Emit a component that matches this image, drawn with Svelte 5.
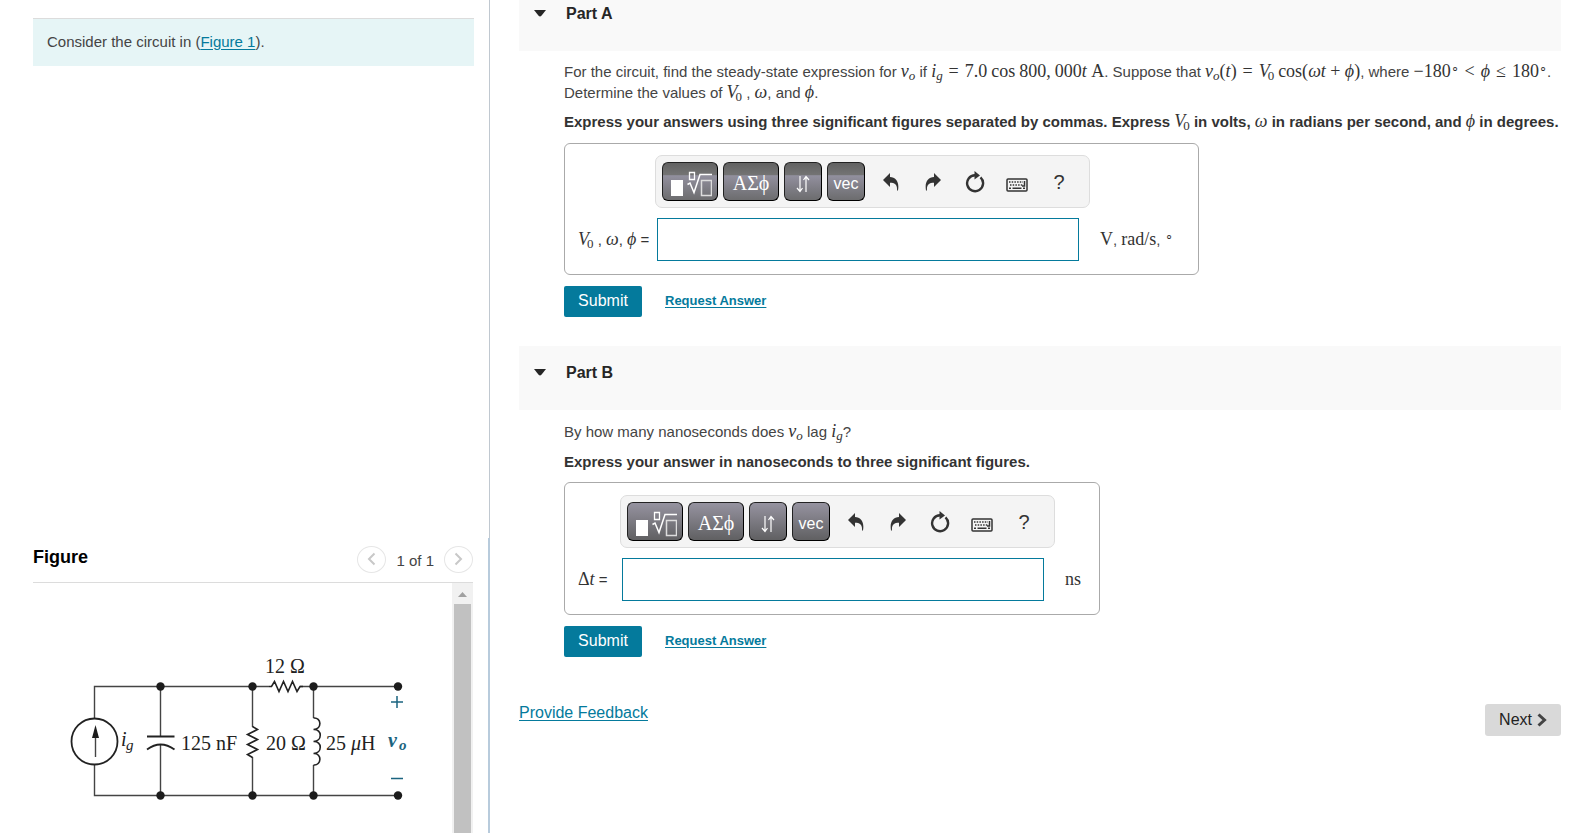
<script>
  let answerA = $state('');
  let answerB = $state('');
</script>

{#snippet vo()}<span class="math"><i>v</i><sub><i>o</i></sub></span>{/snippet}
{#snippet ig()}<span class="math"><i>i</i><sub><i>g</i></sub></span>{/snippet}
{#snippet v0()}<span class="math"><i>V</i><sub class="tight">0</sub></span>{/snippet}

{#snippet partHeader(title)}
  <header class="part-header">
    <button class="toggle" aria-label="Collapse {title}">
      <svg width="12" height="7" viewBox="0 0 12 7"><path d="M0 0h12L7.4 5.8a2 2 0 0 1-2.8 0z" fill="#262626" /></svg>
    </button>
    <h2>{title}</h2>
  </header>
{/snippet}

{#snippet toolbar(variant)}
  <div class="toolbar {variant}">
    <button class="key wide" aria-label="Templates">
      <svg width="44" height="28" viewBox="0 0 44 28" fill="none" stroke="#fff">
        <path d="M3 10h12v16H3z" fill="#fff" stroke="none" />
        <path d="M21.500 2.500h5v7h-5z" stroke-width="1.300" />
        <path d="M19.500 14.500l2.500-1.500 4 9.500L32 4.500h14" stroke-width="1.500" />
        <path d="M33.500 10.500h10v15h-10z" stroke="#ddd" stroke-width="1.500" />
      </svg>
    </button>
    <button class="key wide greek">ΑΣϕ</button>
    <button class="key" aria-label="Arrows">
      <svg width="16" height="18" viewBox="0 0 16 18" fill="none" stroke="#fff" stroke-width="1.200">
        <path d="M5 1v15.500M2 13l3 3.500L7.500 13M11 17V1.500M8.500 5L11 1.500 14 5" />
      </svg>
    </button>
    <button class="key vec">vec</button>
    <div class="tools">
      <button aria-label="Undo">
        <svg width="16" height="18" viewBox="0 0 16 18"><path d="M0 7L7 0v4c6 .3 9.500 5 8 13.500h-1C14.500 12 12 9.800 7 9.800V14z" fill="#333" /></svg>
      </button>
      <button aria-label="Redo">
        <svg width="16" height="18" viewBox="0 0 16 18"><path d="M16 7L9 0v4C3 4.300-.5 9 1 17.500h1C1.500 12 4 9.800 9 9.800V14z" fill="#333" /></svg>
      </button>
      <button aria-label="Reset">
        <svg width="20" height="22" viewBox="0 0 20 22"><path d="M15.500 6.300A8 8 0 1 1 10 4.200" fill="none" stroke="#333" stroke-width="2.400" /><path d="M9.500 0l5.500 4.500-5.500 4z" fill="#333" /></svg>
      </button>
      <button class="low" aria-label="Keyboard">
        <svg width="22" height="14" viewBox="0 0 22 14" fill="none" stroke="#333">
          <rect x="1" y="1" width="20" height="12" rx="1" stroke-width="1.500" />
          <path d="M3 4h14M4 7h13" stroke-width="1.500" stroke-dasharray="1.500 1.200" />
          <path d="M3 10.300h2M6.500 10.300h9M17 10.300h2M18.500 3v5H16" stroke-width="1.500" />
        </svg>
      </button>
      <button class="help" aria-label="Help">?</button>
    </div>
  </div>
{/snippet}

{#snippet actions()}
  <div class="actions">
    <button class="submit">Submit</button>
    <a class="request" href="#answer">Request Answer</a>
  </div>
{/snippet}

<div class="page">
  <aside>
    <div class="intro">
      <p>Consider the circuit in (<a href="#figure">Figure 1</a>).</p>
    </div>
    <section class="figure" id="figure">
      <header>
        <h2>Figure</h2>
        <nav>
          <button aria-label="Previous figure"><svg width="9" height="14" viewBox="0 0 9 14"><path d="M7.500 1.500L2 7l5.500 5.500" /></svg></button>
          <span>1 of 1</span>
          <button aria-label="Next figure"><svg width="9" height="14" viewBox="0 0 9 14"><path d="M1.500 1.500L7 7l-5.500 5.500" /></svg></button>
        </nav>
      </header>
      <div class="viewer">
        <svg class="circuit" width="419" height="250" viewBox="33 583 419 250" role="img" aria-label="Circuit diagram">
          <g fill="none" stroke="#444" stroke-width="1.400">
            <path d="M94.500 718V686.500H269M300 686.500H398" />
            <path d="M269 686.500l2.500 0 3-5 4.500 10 4.500-10 4.500 10 4.500-10 4.500 10 3-5h3" stroke="#222" stroke-width="1.600" />
            <path d="M94.500 765v30.500H398" />
            <circle cx="94.500" cy="741.500" r="23" stroke="#222" stroke-width="1.800" />
            <path d="M95.500 757V735" />
            <path d="M160.500 686v50.500M160.500 745v50.500" />
            <path d="M147 736.500h27.500M147 749.500q13.500-10 27.500 0" stroke="#222" stroke-width="1.800" />
            <path d="M252.500 686v41M252.500 757v38.500M313.500 686v32M313.500 765v30.500" />
            <path d="M252.500 726.500l5 3-10 5 10 5-10 5 10 5-10 5 5 3" stroke="#222" stroke-width="1.600" />
            <path d="M313.500 718c8-1 9 11 0 11.500 9-.5 9 11.500 0 12 9-.5 9 11.500 0 12 9-.5 8 12.500 0 11.500" stroke="#222" stroke-width="1.600" />
          </g>
          <g fill="#1c1c1c">
            <path d="M95.500 725l3.500 13h-7z" />
            <circle cx="160.500" cy="686.500" r="4.200" /><circle cx="252.500" cy="686.500" r="4.200" />
            <circle cx="313.500" cy="686.500" r="4.200" /><circle cx="398" cy="686.500" r="4.200" />
            <circle cx="160.500" cy="795.500" r="4.200" /><circle cx="252.500" cy="795.500" r="4.200" />
            <circle cx="313.500" cy="795.500" r="4.200" /><circle cx="398" cy="795.500" r="4.200" />
          </g>
          <g class="labels">
            <text x="265" y="673">12 Ω</text>
            <text x="181" y="750">125 nF</text>
            <text x="266" y="750">20 Ω</text>
            <text x="326" y="750">25 <tspan font-style="italic">μ</tspan>H</text>
            <text x="121" y="746" font-style="italic">i</text>
            <text x="126" y="750" class="small" font-style="italic">g</text>
            <text x="388" y="747" class="out">v</text>
            <text x="399" y="750" class="out small">o</text>
          </g>
          <path d="M391 702h12M397 696v12M391 778.500h12" stroke="#1b6480" stroke-width="1.500" />
        </svg>
        <div class="scrollbar" aria-hidden="true">
          <svg width="9" height="5" viewBox="0 0 9 5"><path d="M0 5L4.500 0 9 5z" fill="#a0a0a0" /></svg>
          <div class="thumb"></div>
        </div>
      </div>
    </section>
  </aside>

  <main>
    <section class="part first">
      {@render partHeader('Part A')}
      <div class="body">
        <p class="question">
          For the circuit, find the steady-state expression for {@render vo()} if {@render ig()}<span class="math"><b class="rel">=</b>7.0<b class="op"></b>cos<b class="op"></b>800,<b class="op"></b>000<i>t</i>&nbsp;A</span>. Suppose that {@render vo()}<span class="math">(<i>t</i>)<b class="rel">=</b></span>{@render v0()}<span class="math"><b class="op"></b>cos(<i>ωt</i><b class="bin">+</b><i>ϕ</i>)</span>, where <span class="math">−180<sup>∘</sup><b class="rel">&lt;</b><i>ϕ</i><b class="rel">≤</b>180<sup>∘</sup></span>.<br />
          Determine the values of {@render v0()} , <span class="math"><i>ω</i></span>, and <span class="math"><i>ϕ</i></span>.
        </p>
        <p class="instruction">
          Express your answers using three significant figures separated by commas. Express {@render v0()} in volts, <span class="math"><i>ω</i></span> in radians per second, and <span class="math"><i>ϕ</i></span> in degrees.
        </p>
        <div class="answer">
          {@render toolbar('split')}
          <label for="a" class="triple">{@render v0()} , <span class="math"><i>ω</i></span>, <span class="math"><i>ϕ</i></span> =</label>
          <input id="a" type="text" bind:value={answerA} />
          <span class="unit"><span class="math">V</span>, <span class="math">rad/s</span>, <span class="math"><sup>∘</sup></span></span>
        </div>
        {@render actions()}
      </div>
    </section>

    <section class="part">
      {@render partHeader('Part B')}
      <div class="body">
        <p class="question">By how many nanoseconds does {@render vo()} lag {@render ig()}?</p>
        <p class="instruction">Express your answer in nanoseconds to three significant figures.</p>
        <div class="answer">
          {@render toolbar('smooth')}
          <label for="b" class="single"><span class="math">Δ<i>t</i></span> =</label>
          <input id="b" type="text" bind:value={answerB} />
          <span class="unit"><span class="math">ns</span></span>
        </div>
        {@render actions()}
      </div>
    </section>

    <footer>
      <a href="#feedback">Provide Feedback</a>
      <button class="next">Next <svg width="10" height="14" viewBox="0 0 10 14"><path d="M1.500 1.500L7.500 7l-6 5.500" fill="none" stroke="#444" stroke-width="3" /></svg></button>
    </footer>
  </main>
</div>

<style>
  :global(body) { background: #fff; }
  .page {
    display: grid;
    grid-template-columns: 490px minmax(0, 1fr);
    min-height: 100vh;
    font-family: "Liberation Sans", Arial, sans-serif;
    font-size: 15px;
    color: #444;
  }
  * { box-sizing: border-box; }
  h2, p { margin: 0; }
  button { font-family: inherit; padding: 0; border: 0; background: none; cursor: pointer; }
  svg { display: block; }
  a { color: #047a9c; text-underline-offset: 2px; }

  aside { display: flex; flex-direction: column; }
  .intro { flex: 1; padding: 18px 15px 0 33px; border-right: 1px solid #c0c8d0; }
  .intro p {
    padding: 13px 14px 15px;
    line-height: 19px;
    background: #e6f5f6;
    border-top: 1px solid #dcdcdc;
  }
  .figure { padding: 0 15px 0 33px; border-right: 2px solid #b8cbdc; }
  .figure header {
    display: flex;
    justify-content: space-between;
    height: 45px;
    border-bottom: 1px solid #dcdcdc;
  }
  .figure h2 { font-size: 18px; line-height: 38px; color: #000; }
  .figure nav { display: flex; align-items: center; gap: 10px; padding-bottom: 2px; }
  .figure nav span { font-size: 15px; padding-top: 3px; }
  .figure nav button {
    display: grid;
    place-items: center;
    width: 29px;
    height: 27px;
    border: 1px solid #e6e6e6;
    border-radius: 50%;
  }
  .figure nav path { fill: none; stroke: #c8c8c8; stroke-width: 2; }
  .viewer { display: flex; }
  .circuit { flex: 1; min-width: 0; }
  .labels { font-family: "Liberation Serif", serif; font-size: 20px; fill: #222; }
  .labels .small { font-size: 15px; }
  .labels .out { fill: #1b6480; font-style: italic; font-weight: bold; }
  .scrollbar {
    display: flex;
    flex-direction: column;
    align-items: center;
    gap: 7px;
    width: 21px;
    padding-top: 9px;
    background: #f1f1f1;
  }
  .thumb { flex: 1; width: 17px; background: #c1c1c1; }

  main { padding: 0 30px 0 29px; }
  .part { padding-bottom: 29px; }
  .part-header {
    display: flex;
    align-items: center;
    height: 64px;
    padding: 0 15px 11px;
    gap: 20px;
    background: #f9f9f9;
  }
  .first .part-header { height: 51px; padding-bottom: 24px; }
  .part-header h2 { font-size: 16px; color: #262626; }
  .body { padding-left: 45px; }
  .question { padding-top: 11px; line-height: 21px; white-space: nowrap; }
  .instruction { padding: 10px 0; line-height: 20px; font-weight: bold; color: #333; white-space: nowrap; }
  .first .question { padding-top: 10px; }
  .first .instruction { padding: 9px 0 11px; }
  .math { font-family: "Liberation Serif", serif; font-size: 18px; line-height: 1px; font-weight: normal; color: #333; }
  .math b { display: inline-block; font-weight: normal; text-align: center; }
  .math .rel { width: 22px; }
  .math .bin { width: 19px; }
  .math .op { width: 4px; }
  sub, sup { font-size: 13px; line-height: 1px; }
  sub { vertical-align: -3px; }
  sup { vertical-align: 5px; }
  .tight { margin-left: -2px; }

  .answer {
    display: inline-grid;
    grid-template-areas: ". tools ." "label field unit";
    grid-template-columns: auto 435px auto;
    grid-template-rows: 53px 43px;
    row-gap: 10px;
    padding: 12px 18px 13px 13px;
    border: 1px solid #aaa;
    border-radius: 6px;
    vertical-align: top;
  }
  .first .answer { padding-top: 11px; padding-right: 25px; }
  .toolbar {
    grid-area: tools;
    display: flex;
    align-items: center;
    gap: 5px;
    padding: 0 6px;
    background: #f4f4f4;
    border: 1px solid #ddd;
    border-radius: 7px;
  }
  .key {
    display: grid;
    place-items: center;
    width: 38px;
    height: 39px;
    color: #fff;
    border: 1px solid #222;
    border-right-color: #000;
    border-bottom-color: #000;
    border-radius: 6px;
  }
  .wide { width: 56px; }
  .split .key { background: linear-gradient(#626262, #747474 33%, #92909e 34%, #6c6c6e); }
  .smooth .key { background: linear-gradient(#9693a0, #606062); }
  .key svg { margin-top: 4px; }
  .greek { font-family: "Liberation Serif", serif; font-size: 20px; padding-top: 3px; }
  .vec { font-size: 16px; padding-top: 4px; }
  .tools { display: flex; }
  .tools button { display: grid; place-items: center; width: 42px; height: 39px; }
  .tools .low { padding-top: 6px; }
  .tools .help { font-size: 20px; color: #333; padding-top: 2px; }
  label { grid-area: label; align-self: center; white-space: nowrap; color: #333; }
  .triple { width: 77px; }
  .single { width: 42px; }
  input {
    grid-area: field;
    width: 422px;
    margin: 0 0 0 2px;
    padding: 4px 8px;
    border: 1px solid #047a9c;
    outline: 0;
    font: 18px "Liberation Serif", serif;
  }
  .unit { grid-area: unit; align-self: center; padding-left: 10px; white-space: nowrap; }
  .actions { display: flex; align-items: center; gap: 23px; padding-top: 11px; }
  .submit { width: 78px; height: 31px; font-size: 16px; color: #fff; background: #047a9c; border-radius: 2px; padding-bottom: 2px; }
  .request { font-size: 13px; font-weight: bold; padding-bottom: 2px; }
  footer { display: flex; justify-content: space-between; align-items: flex-start; padding-top: 18px; font-size: 16px; }
  .next {
    display: flex;
    align-items: center;
    gap: 5px;
    height: 32px;
    padding: 0 14px;
    font-size: 16px;
    color: #222;
    background: #d9d9d9;
    border-radius: 3px;
  }
</style>
